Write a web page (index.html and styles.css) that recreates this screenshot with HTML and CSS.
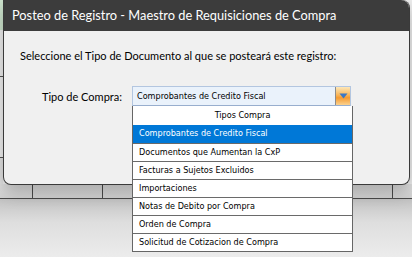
FILE: index.html
```html
<!DOCTYPE html>
<html>
<head>
<meta charset="utf-8">
<link rel="stylesheet" href="styles.css">
</head>
<body>
<div class="desk">
  <div class="backtop">
    <div class="strip">
      <div class="strip-green"></div>
      <div class="strip-a"></div>
      <div class="strip-b"></div>
      <div class="strip-c"></div>
    </div>
  </div>
  <div class="backrow">
    <div class="cell c1"></div>
    <div class="cell c2"></div>
    <div class="cell c3"></div>
    <div class="cell c4"></div>
  </div>
  <div class="backrest"></div>
</div>

<div class="dialog">
  <div class="titlebar">Posteo de Registro - Maestro de Requisiciones de Compra</div>
  <div class="dbody">
    <p class="prompt">Seleccione el Tipo de Documento al que se posteará este registro:</p>
    <div class="field">
      <span class="label">Tipo de Compra:</span>
      <div class="combo">
        <div class="combo-text">Comprobantes de Credito Fiscal</div>
        <div class="combo-btn">
          <svg width="9" height="6" viewBox="0 0 9 6"><path d="M0.5 0.5 H8.5 L4.5 5.5 Z" fill="#3a78c6"/></svg>
        </div>
        <div class="droplist">
          <div class="row head">Tipos Compra</div>
          <div class="row sel">Comprobantes de Credito Fiscal</div>
          <div class="row">Documentos que Aumentan la CxP</div>
          <div class="row">Facturas a Sujetos Excluidos</div>
          <div class="row">Importaciones</div>
          <div class="row">Notas de Debito por Compra</div>
          <div class="row">Orden de Compra</div>
          <div class="row">Solicitud de Cotizacion de Compra</div>
        </div>
      </div>
    </div>
  </div>
</div>
</body>
</html>
```

FILE: styles.css
```css
html, body {
  margin: 0;
  padding: 0;
}
body {
  width: 412px;
  height: 257px;
  overflow: hidden;
  position: relative;
  background: #ececec;
  font-family: "Lato", "Noto Sans", sans-serif;
}
.desk {
  display: flex;
  flex-direction: column;
  height: 257px;
}
.backtop {
  height: 184px;
  background: #f0f0f0;
}
.strip {
  width: 3px;
  height: 184px;
  display: flex;
  flex-direction: column;
}
.strip-green {
  height: 30px;
  background: #cfe6cf;
}
.strip-a {
  height: 46px;
  background: #f0f0f0;
  border-bottom: 1px solid #555;
}
.strip-b {
  height: 80px;
  background: #f2f2f2;
  border-bottom: 1px solid #555;
}
.strip-c {
  flex: 1;
  background: #e4e4e4;
}
.backrow {
  height: 14px;
  display: flex;
  border-bottom: 1px solid #4a4a4a;
  background: linear-gradient(#e2e2e2, #d2d2d2);
}
.cell {
  border-right: 1px solid #4a4a4a;
}
.c1 { width: 32px; }
.c2 { width: 69px; }
.c3 { width: 289px; }
.c4 { flex: 1; border-right: none; }
.backrest {
  flex: 1;
  background: linear-gradient(#c4c4c4, #dedede 40%, #ececec);
}

.dialog {
  position: absolute;
  left: 3px;
  top: 0;
  width: 405px;
  height: 184px;
  border: 1px solid #3a3a3a;
  border-top: none;
  border-radius: 0 8px 8px 8px;
  background: #f0f0f0;
  box-shadow: 0 6px 18px rgba(0, 0, 0, 0.28);
}
.titlebar {
  height: 31px;
  background: #3c3c3c;
  color: #ffffff;
  font-size: 12.8px;
  line-height: 30px;
  padding-left: 8px;
  border-radius: 0 8px 0 0;
  white-space: nowrap;
}
.dbody {
  padding: 17px 0 0 16px;
}
.prompt {
  margin: 0;
  font-size: 11px;
  line-height: 16px;
  color: #000;
  white-space: nowrap;
}
.field {
  display: flex;
  align-items: center;
  margin-top: 22px;
}
.label {
  font-size: 11px;
  color: #000;
  width: 102px;
  padding-left: 22px;
  box-sizing: border-box;
  white-space: nowrap;
}
.combo {
  position: relative;
  display: flex;
  margin-left: 10px;
  width: 219px;
  height: 21px;
  box-sizing: border-box;
  border: 1px solid #b3c6e0;
  border-bottom: 2px solid #98aece;
  background: #eaf2fb;
}
.combo-text {
  flex: 1;
  font-family: "DejaVu Sans Condensed", "DejaVu Sans", sans-serif;
  font-size: 9px;
  line-height: 18px;
  padding-left: 4px;
  color: #000;
  white-space: nowrap;
}
.combo-btn {
  width: 14px;
  border-left: 1px solid #8c8c8c;
  background: linear-gradient(#fde7b8, #f8b558 45%, #f59a30 60%, #fbd28f);
  display: flex;
  align-items: center;
  justify-content: center;
}
.droplist {
  position: absolute;
  left: -1px;
  top: 19px;
  width: 221px;
  background: #fff;
  border: 1px solid #666;
  border-top: none;
  box-sizing: border-box;
  font-family: "DejaVu Sans Condensed", "DejaVu Sans", sans-serif;
  font-size: 9px;
  color: #000;
  display: flex;
  flex-direction: column;
}
.row {
  height: 18px;
  line-height: 17px;
  padding-left: 6px;
  border-top: 1px solid #6a6a6a;
  box-sizing: border-box;
  white-space: nowrap;
}
.row.head {
  height: 19px;
  border-top: none;
  text-align: center;
  padding-left: 0;
  line-height: 19px;
}
.row.sel {
  background: #0078d7;
  color: #fff;
  border-top: none;
}
```
